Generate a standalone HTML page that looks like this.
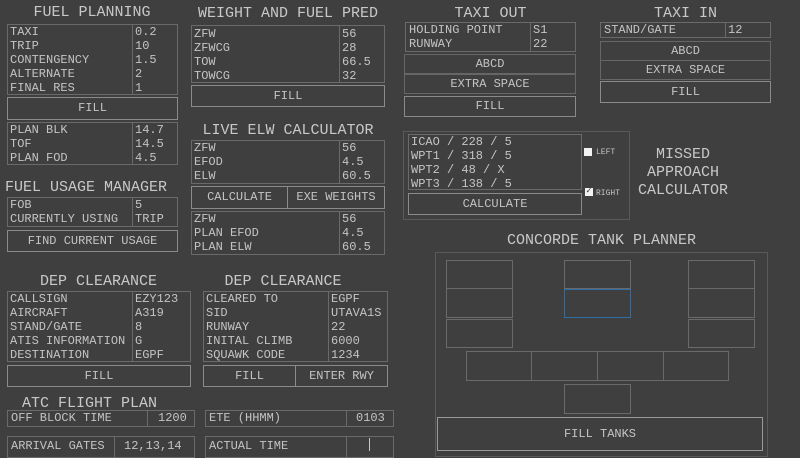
<!DOCTYPE html>
<html><head><style>
*{margin:0;padding:0;box-sizing:border-box}
body{width:800px;height:455px;background:#3f3f3f;overflow:hidden;position:relative;font-family:"Liberation Mono",monospace;color:#c4c4c4;font-size:12px}
.a{position:absolute}
.t{position:absolute;font-family:"Liberation Mono",monospace;font-size:15px;color:#c8c8c8;white-space:nowrap;text-align:center;line-height:18px}
.bx{position:absolute;border:1px solid #6a6a6a;line-height:14px;white-space:pre;padding-left:2px}
.v{position:absolute;top:-1px;bottom:-1px;border-left:1px solid #6a6a6a;border-right:1px solid #6a6a6a;border-top:1px solid #6a6a6a;border-bottom:1px solid #6a6a6a;padding-left:2px;line-height:14px}
.bt{position:absolute;border:1px solid #8a8a8a;text-align:center;white-space:nowrap}
.tk{position:absolute;border:1px solid #6a6a6a}
</style></head><body>

<!-- FUEL PLANNING -->
<div class="t" style="left:7px;width:170px;top:4px">FUEL PLANNING</div>
<div class="bx" style="left:7px;top:24px;width:171px;height:71px;padding-top:0">TAXI
TRIP
CONTENGENCY
ALTERNATE
FINAL RES<div class="v" style="left:124px;right:-1px">0.2
10
1.5
2
1</div></div>
<div class="bt" style="left:7px;top:97px;width:171px;height:23px;line-height:21px">FILL</div>
<div class="bx" style="left:7px;top:122px;width:171px;height:43px">PLAN BLK
TOF
PLAN FOD<div class="v" style="left:124px;right:-1px">14.7
14.5
4.5</div></div>

<!-- FUEL USAGE -->
<div class="t" style="left:5px;top:179px">FUEL USAGE MANAGER</div>
<div class="bx" style="left:7px;top:197px;width:171px;height:30px">FOB
CURRENTLY USING<div class="v" style="left:124px;right:-1px">5
TRIP</div></div>
<div class="bt" style="left:7px;top:230px;width:171px;height:22px;line-height:20px">FIND CURRENT USAGE</div>

<!-- WEIGHT AND FUEL -->
<div class="t" style="left:191px;width:194px;top:5px">WEIGHT AND FUEL PRED</div>
<div class="bx" style="left:191px;top:25px;width:194px;height:58px;padding-top:1px">ZFW
ZFWCG
TOW
TOWCG<div class="v" style="left:147px;right:-1px;padding-top:1px">56
28
66.5
32</div></div>
<div class="bt" style="left:191px;top:85px;width:194px;height:22px;line-height:20px">FILL</div>

<div class="t" style="left:191px;width:194px;top:122px">LIVE ELW CALCULATOR</div>
<div class="bx" style="left:191px;top:140px;width:194px;height:44px">ZFW
EFOD
ELW<div class="v" style="left:147px;right:-1px">56
4.5
60.5</div></div>
<div class="bt" style="left:191px;top:186px;width:97px;height:23px;line-height:21px">CALCULATE</div>
<div class="bt" style="left:287px;top:186px;width:98px;height:23px;line-height:21px">EXE WEIGHTS</div>
<div class="bx" style="left:191px;top:211px;width:194px;height:44px">ZFW
PLAN EFOD
PLAN ELW<div class="v" style="left:147px;right:-1px">56
4.5
60.5</div></div>

<!-- DEP CLEARANCE 1 -->
<div class="t" style="left:7px;width:183px;top:273px">DEP CLEARANCE</div>
<div class="bx" style="left:7px;top:291px;width:184px;height:71px">CALLSIGN
AIRCRAFT
STAND/GATE
ATIS INFORMATION
DESTINATION<div class="v" style="left:124px;right:-1px">EZY123
A319
8
G
EGPF</div></div>
<div class="bt" style="left:7px;top:365px;width:184px;height:22px;line-height:20px">FILL</div>

<!-- DEP CLEARANCE 2 -->
<div class="t" style="left:203px;width:160px;top:273px">DEP CLEARANCE</div>
<div class="bx" style="left:203px;top:291px;width:185px;height:71px">CLEARED TO
SID
RUNWAY
INITAL CLIMB
SQUAWK CODE<div class="v" style="left:124px;right:-1px">EGPF
UTAVA1S
22
6000
1234</div></div>
<div class="bt" style="left:203px;top:365px;width:93px;height:22px;line-height:20px">FILL</div>
<div class="bt" style="left:295px;top:365px;width:93px;height:22px;line-height:20px">ENTER RWY</div>

<!-- ATC FLIGHT PLAN -->
<div class="t" style="left:22px;top:395px">ATC FLIGHT PLAN</div>
<div class="bx" style="left:7px;top:410px;width:188px;height:17px;line-height:15px;padding-left:3px">OFF BLOCK TIME<div class="v" style="left:139px;right:-1px;line-height:15px;padding-left:10px">1200</div></div>
<div class="bx" style="left:205px;top:410px;width:189px;height:17px;line-height:15px;padding-left:3px">ETE (HHMM)<div class="v" style="left:140px;right:-1px;line-height:15px;padding-left:9px">0103</div></div>
<div class="bx" style="left:7px;top:436px;width:188px;height:22px;line-height:18px;padding-left:3px">ARRIVAL GATES<div class="v" style="left:106px;right:-1px;line-height:18px;padding-left:9px">12,13,14</div></div>
<div class="bx" style="left:205px;top:436px;width:189px;height:22px;line-height:18px;padding-left:3px">ACTUAL TIME<div class="v" style="left:140px;right:-1px"></div></div>
<div class="a" style="left:369px;top:438px;width:1px;height:13px;background:#c8c8c8"></div>

<!-- TAXI OUT -->
<div class="t" style="left:405px;width:171px;top:5px">TAXI OUT</div>
<div class="bx" style="left:405px;top:22px;width:171px;height:30px;padding-left:3px">HOLDING POINT
RUNWAY<div class="v" style="left:124px;right:-1px">S1
22</div></div>
<div class="bt" style="left:404px;top:54px;width:172px;height:20px;line-height:18px;border-color:#666">ABCD</div>
<div class="bt" style="left:404px;top:74px;width:172px;height:20px;line-height:18px;border-color:#666">EXTRA SPACE</div>
<div class="bt" style="left:404px;top:96px;width:172px;height:21px;line-height:19px">FILL</div>

<!-- TAXI IN -->
<div class="t" style="left:600px;width:171px;top:5px">TAXI IN</div>
<div class="bx" style="left:600px;top:22px;width:171px;height:16px;padding-left:3px">STAND/GATE<div class="v" style="left:124px;right:-1px">12</div></div>
<div class="bt" style="left:600px;top:41px;width:171px;height:20px;line-height:18px;border-color:#666">ABCD</div>
<div class="bt" style="left:600px;top:60px;width:171px;height:20px;line-height:18px;border-color:#666">EXTRA SPACE</div>
<div class="bt" style="left:600px;top:81px;width:171px;height:22px;line-height:20px">FILL</div>

<!-- MISSED APPROACH -->
<div class="a" style="left:403px;top:131px;width:227px;height:89px;border:1px solid #5a5a5a"></div>
<div class="bx" style="left:408px;top:134px;width:174px;height:56px;padding-left:2px;font-size:12px">ICAO / 228 / 5
WPT1 / 318 / 5
WPT2 / 48 / X
WPT3 / 138 / 5</div>
<div class="bt" style="left:408px;top:193px;width:174px;height:22px;line-height:20px">CALCULATE</div>
<div class="a" style="left:584px;top:148px;width:8px;height:8px;background:#f2f2f2"></div>
<div class="a" style="left:596px;top:148px;font-size:8px;line-height:9px">LEFT</div>
<div class="a" style="left:585px;top:188px;width:8px;height:8px;background:#f2f2f2;color:#333;font-size:8px;line-height:8px;text-align:center">✓</div>
<div class="a" style="left:596px;top:189px;font-size:8px;line-height:9px">RIGHT</div>
<div class="t" style="left:630px;width:106px;top:146px;line-height:18px">MISSED<br>APPROACH<br>CALCULATOR</div>

<!-- CONCORDE -->
<div class="t" style="left:435px;width:333px;top:232px">CONCORDE TANK PLANNER</div>
<div class="a" style="left:435px;top:252px;width:333px;height:205px;border:1px solid #5a5a5a"></div>
<div class="tk" style="left:446px;top:260px;width:67px;height:29px"></div>
<div class="tk" style="left:446px;top:288px;width:67px;height:30px"></div>
<div class="tk" style="left:446px;top:319px;width:67px;height:29px"></div>
<div class="tk" style="left:564px;top:260px;width:67px;height:29px"></div>
<div class="tk" style="left:564px;top:289px;width:67px;height:29px;border-color:#2d6ea8"></div>
<div class="tk" style="left:688px;top:260px;width:67px;height:29px"></div>
<div class="tk" style="left:688px;top:288px;width:67px;height:30px"></div>
<div class="tk" style="left:688px;top:319px;width:67px;height:29px"></div>
<div class="tk" style="left:466px;top:351px;width:66px;height:30px"></div>
<div class="tk" style="left:531px;top:351px;width:67px;height:30px"></div>
<div class="tk" style="left:597px;top:351px;width:67px;height:30px"></div>
<div class="tk" style="left:663px;top:351px;width:66px;height:30px"></div>
<div class="tk" style="left:564px;top:384px;width:67px;height:30px"></div>
<div class="bt" style="left:437px;top:417px;width:326px;height:34px;line-height:32px;border-color:#9a9a9a">FILL TANKS</div>

</body></html>
